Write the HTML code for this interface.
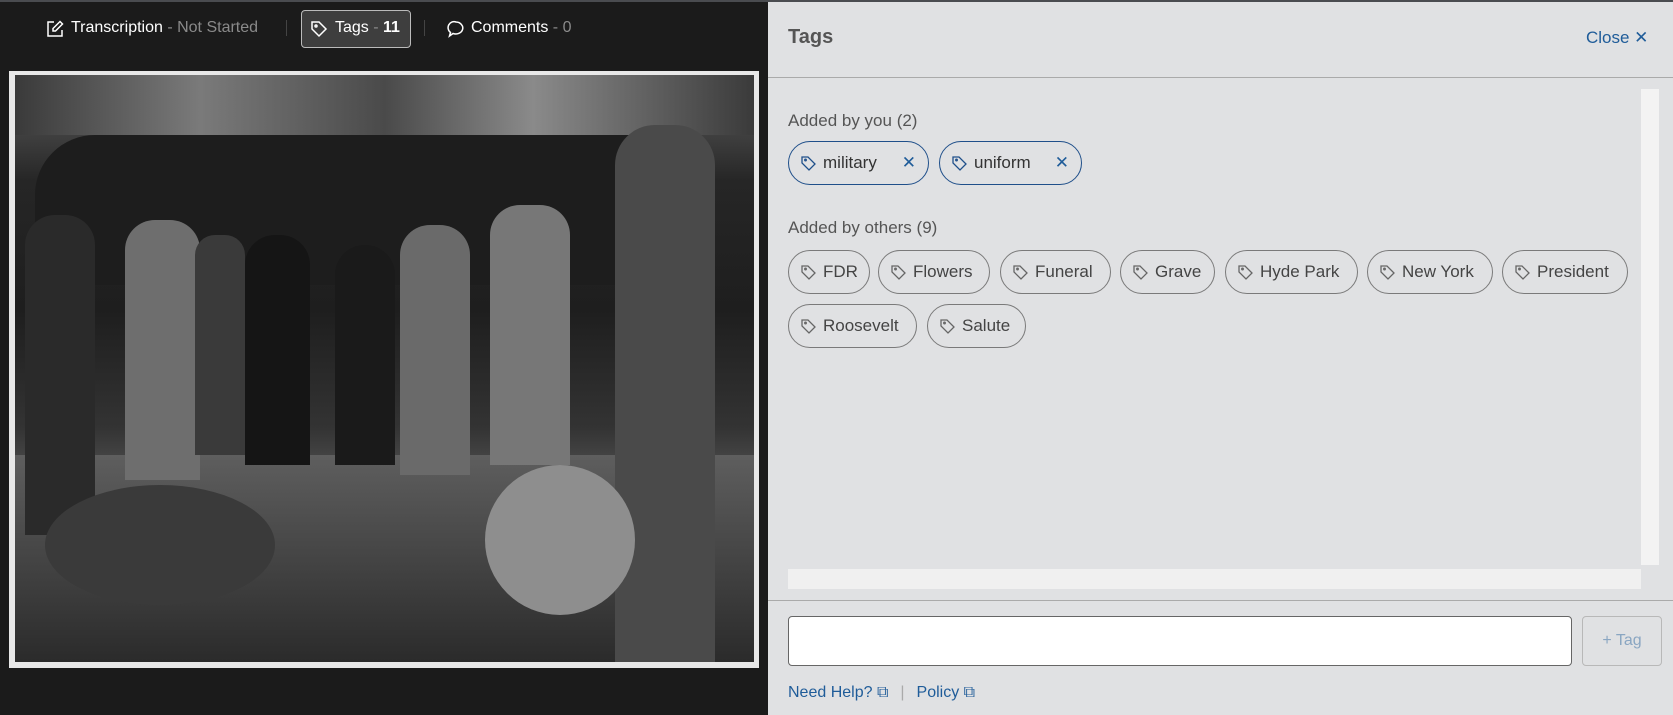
<!DOCTYPE html>
<html><head><meta charset="utf-8"><style>
*{box-sizing:border-box;margin:0;padding:0}
body{width:1673px;height:715px;overflow:hidden;background:#1b1b1b;font-family:"Liberation Sans",sans-serif;position:relative}
.top{position:absolute;left:0;top:0;width:1673px;height:2px;background:#4a4c50}
.nav{position:absolute;top:0;left:0;height:58px;color:#fff;font-size:16px}
.nav span{position:absolute;top:19px;white-space:nowrap}
.g{color:#8a8a8a}
.tagbtn{position:absolute;left:301px;top:10px;width:110px;height:38px;border:1px solid #bbb;border-radius:4px;background:#3e3e3e}
.sep{position:absolute;top:20px;width:1px;height:16px;background:#444}
.photo{position:absolute;left:9px;top:71px;width:750px;height:597px;background:#e8e8e8;padding:4px 5px 6px 6px}
.pin{width:100%;height:100%;position:relative;overflow:hidden;background:linear-gradient(180deg,#8a8a8a 0%,#4a4a4a 7%,#262626 18%,#1e1e1e 40%,#333 60%,#5a5a5a 72%,#4a4a4a 85%,#333 100%)}
.pin div{position:absolute}
.panel{position:absolute;left:768px;top:2px;width:905px;height:713px;background:#e0e1e3;color:#555}
.chip{position:absolute;height:44px;border:1px solid #7a7a7a;border-radius:22px;font-size:17px;color:#444;padding-left:34px;line-height:42px}
.chip svg{position:absolute;left:12px;top:13px}
.mine{border-color:#1f4f8a;color:#333}
.x{position:absolute;right:12px;top:0;color:#1f5c99;font-size:17px}
.lbl{position:absolute;left:20px;font-size:17px;color:#555}
a{color:#1f5c99;text-decoration:none}
</style></head><body>
<div class="top"></div>
<div class="nav">
<svg style="position:absolute;left:46px;top:20px" width="18" height="18" viewBox="0 0 18 18" fill="none" stroke="#fff" stroke-width="1.5"><path d="M8 2H2v14h14v-6"/><path d="M14 1.5l2.5 2.5-7 7H7V8.5z"/></svg>
<span style="left:71px">Transcription <span class="g" style="position:static">- Not Started</span></span>
<div class="sep" style="left:286px"></div>
<div class="tagbtn"></div>
<svg style="position:absolute;left:310px;top:20px" width="18" height="18" viewBox="0 0 18 18" fill="none" stroke="#fff" stroke-width="1.5"><path d="M2 2h7l7 7-7 7-7-7z"/><circle cx="6" cy="6" r="1"/></svg>
<span style="left:335px">Tags <span class="g" style="position:static">-</span> <b>11</b></span>
<div class="sep" style="left:424px"></div>
<svg style="position:absolute;left:447px;top:20px" width="18" height="18" viewBox="0 0 18 18" fill="none" stroke="#fff" stroke-width="1.5"><path d="M9 2a7 6 0 1 1-3 11.5L2.5 16l1-3.5A6 6 0 0 1 9 2z"/></svg>
<span style="left:471px">Comments <span class="g" style="position:static">- 0</span></span>
</div>
<div class="photo"><div class="pin">
<div style="left:0;top:0;width:740px;height:60px;background:linear-gradient(90deg,#3a3a3a,#7a7a7a 25%,#4a4a4a 50%,#8a8a8a 70%,#3a3a3a)"></div>
<div style="left:20px;top:60px;width:660px;height:150px;border-radius:60px 60px 0 0;background:#1d1d1d"></div>
<div style="left:0;top:380px;width:740px;height:210px;background:linear-gradient(180deg,#5e5e5e,#444 50%,#2a2a2a)"></div>
<div style="left:10px;top:140px;width:70px;height:320px;background:#2a2a2a;border-radius:30px 30px 0 0"></div>
<div style="left:110px;top:145px;width:75px;height:260px;background:#6e6e6e;border-radius:30px 30px 0 0"></div>
<div style="left:180px;top:160px;width:50px;height:220px;background:#3a3a3a;border-radius:20px 20px 0 0"></div>
<div style="left:230px;top:160px;width:65px;height:230px;background:#151515;border-radius:30px 30px 0 0"></div>
<div style="left:320px;top:170px;width:60px;height:220px;background:#1a1a1a;border-radius:30px 30px 0 0"></div>
<div style="left:385px;top:150px;width:70px;height:250px;background:#6a6a6a;border-radius:30px 30px 0 0"></div>
<div style="left:475px;top:130px;width:80px;height:260px;background:#777;border-radius:30px 30px 0 0"></div>
<div style="left:600px;top:50px;width:100px;height:540px;background:#4a4a4a;border-radius:40px 40px 0 0"></div>
<div style="left:30px;top:410px;width:230px;height:120px;background:#3a3a3a;border-radius:50%"></div>
<div style="left:470px;top:390px;width:150px;height:150px;background:#8e8e8e;border-radius:50%"></div>
</div></div>
<div class="panel">
<div style="position:absolute;left:20px;top:24px;font-size:20px;font-weight:bold;color:#555">Tags</div>
<div style="position:absolute;left:818px;top:26px;font-size:17px;color:#1f5c99">Close ✕</div>
<div style="position:absolute;left:0;top:75px;width:905px;height:1px;background:#aaa"></div>
<div class="lbl" style="top:109px">Added by you (2)</div>
<div class="chip mine" style="left:20px;top:139px;width:141px">military<span class="x">✕</span><svg width="16" height="16" viewBox="0 0 16 16" fill="none" stroke="#1f4f8a" stroke-width="1.3"><path d="M1 2h6l7 7-6 6-7-7z"/><circle cx="4.5" cy="5" r=".8"/></svg></div>
<div class="chip mine" style="left:171px;top:139px;width:143px">uniform<span class="x">✕</span><svg width="16" height="16" viewBox="0 0 16 16" fill="none" stroke="#1f4f8a" stroke-width="1.3"><path d="M1 2h6l7 7-6 6-7-7z"/><circle cx="4.5" cy="5" r=".8"/></svg></div>
<div class="lbl" style="top:216px">Added by others (9)</div>
<div id="r"></div>
<div style="position:absolute;left:873px;top:87px;width:18px;height:476px;background:#f3f3f3"></div>
<div style="position:absolute;left:20px;top:567px;width:853px;height:20px;background:#f0f0f0"></div>
<div style="position:absolute;left:0;top:598px;width:905px;height:1px;background:#aaa"></div>
<div style="position:absolute;left:20px;top:614px;width:784px;height:50px;background:#fff;border:1px solid #666;border-radius:4px"></div>
<div style="position:absolute;left:814px;top:614px;width:80px;height:50px;border:1px solid #b8b8b8;border-radius:4px;color:#8aa6c2;font-size:16px;line-height:48px;text-align:center">+ Tag</div>
<div style="position:absolute;left:20px;top:682px;font-size:16px"><a>Need Help? ⧉</a><span style="color:#aaa;margin:0 12px">|</span><a>Policy ⧉</a></div>
</div>
<script>
var t=[["FDR",788,870,250],["Flowers",878,990,250],["Funeral",1000,1111,250],["Grave",1120,1215,250],["Hyde Park",1225,1358,250],["New York",1367,1493,250],["President",1502,1628,250],["Roosevelt",788,917,304],["Salute",927,1026,304]];
var h="";t.forEach(function(c){h+='<div class="chip" style="left:'+(c[1]-768)+'px;top:'+(c[3]-2)+'px;width:'+(c[2]-c[1])+'px">'+c[0]+'<svg width="16" height="16" viewBox="0 0 16 16" fill="none" stroke="#666" stroke-width="1.3"><path d="M1 2h6l7 7-6 6-7-7z"/><circle cx="4.5" cy="5" r=".8"/></svg></div>'});
document.getElementById("r").innerHTML=h;
</script>
</body></html>
